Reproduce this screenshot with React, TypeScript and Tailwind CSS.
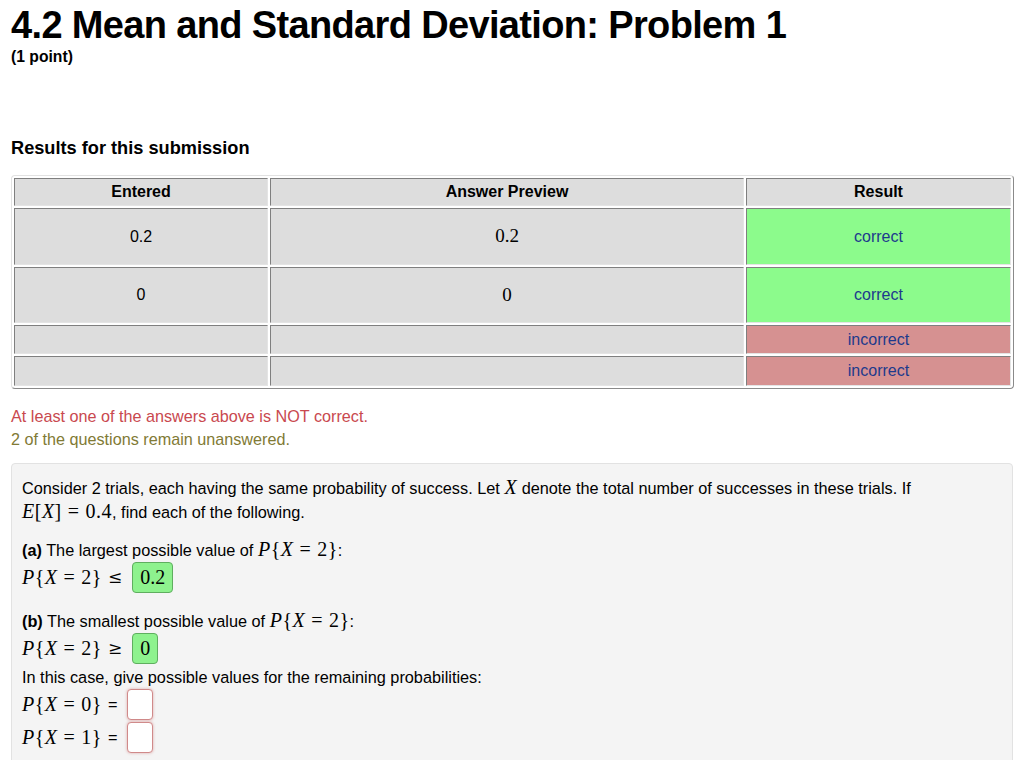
import type { ReactNode } from "react";

const Math = ({ children }: { children: ReactNode }) => (
  <span className="font-['Liberation_Serif',serif] text-[20px] tracking-[0.5px]">{children}</span>
);

const I = ({ children }: { children: ReactNode }) => <span className="italic">{children}</span>;

const Rel = ({ c }: { c: string }) => (
  <span className={c === "=" ? "mx-[6px]" : "mx-[6px] font-['DejaVu_Serif',serif] text-[17px]"}>{c}</span>
);

const Px = ({ n }: { n: string }) => (
  <Math>
    <I>P</I>
    {"{"}
    <I>X</I>
    <Rel c="=" />
    {n}
    {"}"}
  </Math>
);

const cellBorder =
  "border border-t-[#7f7f7f] border-l-[#7f7f7f] border-b-[#e4e4e4] border-r-[#e4e4e4]";

const rows = [
  { entered: "0.2", preview: "0.2", ok: true, h: "h-[57px]" },
  { entered: "0", preview: "0", ok: true, h: "h-[56px]" },
  { entered: "", preview: "", ok: false, h: "h-[29px]" },
  { entered: "", preview: "", ok: false, h: "h-[30px]" },
];

function AnswerBox({ value, ok }: { value?: string; ok: boolean }) {
  return ok ? (
    <span className="ml-[4px] inline-flex h-[31px] items-center rounded-[4px] border border-[#5fae5f] bg-[#8ef28e] px-[7px] font-['Liberation_Serif',serif] text-[20px]">
      {value}
    </span>
  ) : (
    <span className="ml-[4px] inline-block h-[31px] w-[26px] rounded-[4px] border border-[#d08a8a] bg-white shadow-[0_0_3px_rgba(200,80,80,0.45)]" />
  );
}

export default function App() {
  return (
    <div className="min-h-[760px] bg-white px-[11px] font-['Liberation_Sans',Arial,sans-serif] text-black">
      <h1 className="pt-[3px] text-[38px] leading-[44px] font-bold tracking-[-0.65px]">
        4.2 Mean and Standard Deviation: Problem 1
      </h1>
      <div className="text-[15.7px] leading-[20px] font-bold">(1 point)</div>

      <h2 className="mt-[70px] text-[18.2px] leading-[22px] font-bold">Results for this submission</h2>

      {/* results table */}
      <div className="mt-[16px] w-[1003px] rounded-[4px] border border-t-[#e2e2e2] border-l-[#e2e2e2] border-b-[#8a8a8a] border-r-[#8a8a8a] p-[2px]">
        <div className="grid grid-cols-[254px_474px_265px] gap-[2px] text-[16px]">
          <div className={`flex h-[28px] items-center justify-center bg-[#dddddd] font-bold ${cellBorder}`}>Entered</div>
          <div className={`flex h-[28px] items-center justify-center bg-[#dddddd] font-bold ${cellBorder}`}>Answer Preview</div>
          <div className={`flex h-[28px] items-center justify-center bg-[#dddddd] font-bold ${cellBorder}`}>Result</div>
          {rows.map((r, i) => (
            <div key={i} className="contents">
              <div className={`flex ${r.h} items-center justify-center bg-[#dddddd] ${cellBorder}`}>{r.entered}</div>
              <div className={`flex ${r.h} items-center justify-center bg-[#dddddd] font-['Liberation_Serif',serif] text-[19px] ${cellBorder}`}>
                {r.preview}
              </div>
              <div
                className={`flex ${r.h} items-center justify-center text-[#1d3a8c] ${cellBorder} ${
                  r.ok ? "bg-[#8cfb8c]" : "bg-[#d69191]"
                }`}
              >
                {r.ok ? "correct" : "incorrect"}
              </div>
            </div>
          ))}
        </div>
      </div>

      <div className="mt-[16px] text-[16.2px] leading-[23px]">
        <div className="text-[#c9494f]">At least one of the answers above is NOT correct.</div>
        <div className="text-[#817a35]">2 of the questions remain unanswered.</div>
      </div>

      {/* problem body */}
      <div className="mt-[12px] w-[1002px] rounded-[4px] border border-[#e2e2e2] bg-[#f4f4f4] px-[10px] pt-[12px] pb-[20px] text-[16.3px] leading-[23px]">
        <p>
          Consider 2 trials, each having the same probability of success. Let{" "}
          <Math>
            <I>X</I>
          </Math>{" "}
          denote the total number of successes in these trials. If
          <br />
          <Math>
            <I>E</I>[<I>X</I>]<Rel c="=" />0.4
          </Math>
          , find each of the following.
        </p>

        <p className="mt-[14px]">
          <b>(a)</b> The largest possible value of <Px n="2" />:
        </p>
        <div className="flex h-[33px] items-start">
          <span className="flex h-[31px] items-center">
            <Px n="2" />
            <Rel c="≤" />
          </span>
          <AnswerBox value="0.2" ok />
        </div>

        <p className="mt-[14px]">
          <b>(b)</b> The smallest possible value of <Px n="2" />:
        </p>
        <div className="flex h-[33px] items-start">
          <span className="flex h-[31px] items-center">
            <Px n="2" />
            <Rel c="≥" />
          </span>
          <AnswerBox value="0" ok />
        </div>
        <p>In this case, give possible values for the remaining probabilities:</p>
        <div className="flex h-[33px] items-start">
          <span className="flex h-[31px] items-center">
            <Px n="0" />
            <Rel c="=" />
          </span>
          <AnswerBox ok={false} />
        </div>
        <div className="flex h-[33px] items-start">
          <span className="flex h-[31px] items-center">
            <Px n="1" />
            <Rel c="=" />
          </span>
          <AnswerBox ok={false} />
        </div>
      </div>
    </div>
  );
}
